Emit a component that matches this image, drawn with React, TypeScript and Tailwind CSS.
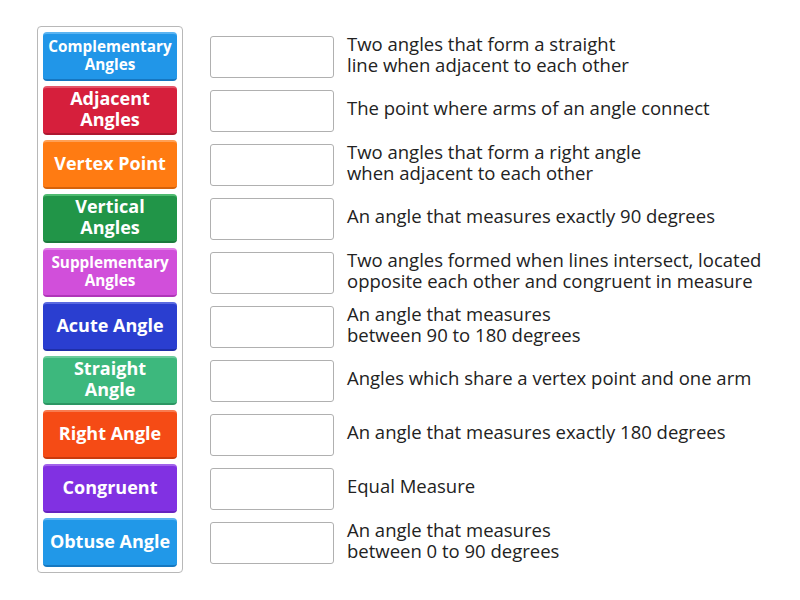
const terms = [
  { label: "Complementary Angles", cls: "bg-[#2196e8] border-t-[#5ab4f2] border-b-[#1676c0]", small: true },
  { label: "Adjacent Angles", cls: "bg-[#d61f3c] border-t-[#e55468] border-b-[#ad1730]" },
  { label: "Vertex Point", cls: "bg-[#ff7b12] border-t-[#ffa055] border-b-[#d6620a]" },
  { label: "Vertical Angles", cls: "bg-[#219548] border-t-[#4fbb70] border-b-[#1a7a3c]" },
  { label: "Supplementary Angles", cls: "bg-[#d14fda] border-t-[#e27fe8] border-b-[#b035b8]", small: true },
  { label: "Acute Angle", cls: "bg-[#2a3ed0] border-t-[#5a6ae0] border-b-[#1f2fa8]" },
  { label: "Straight Angle", cls: "bg-[#3db87d] border-t-[#6ccc9c] border-b-[#2c9663]" },
  { label: "Right Angle", cls: "bg-[#f54b15] border-t-[#f87b50] border-b-[#c93a0d]" },
  { label: "Congruent", cls: "bg-[#8131e2] border-t-[#a263ea] border-b-[#6622bf]" },
  { label: "Obtuse Angle", cls: "bg-[#2198e8] border-t-[#5ab4f2] border-b-[#1678c0]" },
];

const definitions = [
  ["Two angles that form a straight", "line when adjacent to each other"],
  ["The point where arms of an angle connect"],
  ["Two angles that form a right angle", "when adjacent to each other"],
  ["An angle that measures exactly 90 degrees"],
  ["Two angles formed when lines intersect, located", "opposite each other and congruent in measure"],
  ["An angle that measures", "between 90 to 180 degrees"],
  ["Angles which share a vertex point and one arm"],
  ["An angle that measures exactly 180 degrees"],
  ["Equal Measure"],
  ["An angle that measures", "between 0 to 90 degrees"],
];

export default function App() {
  return (
    <div className="w-[800px] h-[600px] bg-white flex items-start pl-[37px] pt-[26px] font-['Open_Sans',sans-serif]">
      <div className="w-[146px] border border-[#b8b8b8] rounded-[4px] p-[5px] flex flex-col gap-[5px]">
        {terms.map((t) => (
          <div
            key={t.label}
            className={`h-[49px] rounded-[4px] border-t-2 border-b-2 pb-[3px] flex items-center justify-center text-center text-white font-bold px-1 ${t.cls} ${
              t.small ? "text-[15.3px] leading-[18px]" : "text-[18px] leading-[21px]"
            }`}
          >
            {t.label}
          </div>
        ))}
      </div>
      <div className="ml-[27px] pt-[6px] flex flex-col gap-[5px]">
        {definitions.map((d, i) => (
          <div key={i} className="h-[49px] flex items-center">
            <div className="w-[124px] h-[42px] border border-[#b0b0b0] rounded-[3px] bg-white" />
            <div className="ml-[13px] pb-[6px] text-[18.5px] leading-[21px] text-[#222] whitespace-nowrap">
              {d.map((line) => (
                <div key={line}>{line}</div>
              ))}
            </div>
          </div>
        ))}
      </div>
    </div>
  );
}
